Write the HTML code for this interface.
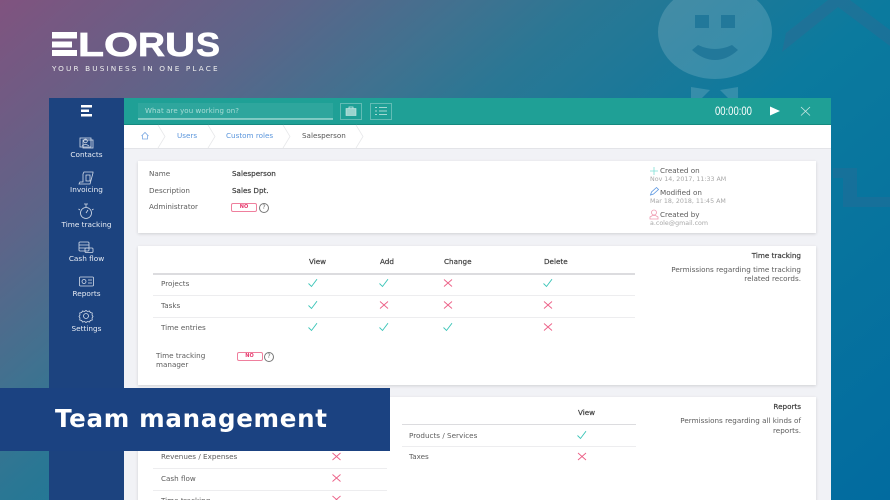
<!DOCTYPE html>
<html><head><meta charset="utf-8"><style>
html,body{margin:0;padding:0}
#p{position:relative;width:890px;height:500px;overflow:hidden;background:linear-gradient(140deg,#80537f 0%,#5c6589 20%,#3f7290 32%,#2a7794 40%,#0b7a9e 60%,#026b9f 100%);font-family:"DejaVu Sans",sans-serif}
.a{position:absolute}
.t{position:absolute;white-space:nowrap;line-height:10px;font-size:7.2px;color:#5c5c5c}
.b{color:#3c3c3c;-webkit-text-stroke:.2px #3c3c3c}
.d{font-size:6.3px;color:#a8a8a8}
.n{color:#e8edf5;font-size:7.3px;text-align:center;width:74px;left:49.5px}
.card{position:absolute;background:#fff;box-shadow:0 1px 3px rgba(0,0,0,.14)}
.l{position:absolute;height:1px;background:#e4e4e6}
svg{position:absolute;overflow:visible}
.no{position:absolute;width:24px;height:7px;border:1px solid #ef7f9d;border-radius:2px;background:#fff;color:#e7366c;font:bold 5px/7px "DejaVu Sans",sans-serif;text-align:center}
.q{position:absolute;width:8px;height:8px;border:1px solid #777;border-radius:50%;color:#666;font:6px/8px "DejaVu Sans",sans-serif;text-align:center}
</style></head><body><div id="p">
<svg width="890" height="500" style="left:0;top:0">
<defs>
<g id="c"><path d="M-4.500 0.500L-1.500 3.500L4 -3.800" fill="none" stroke="#3cc5b8" stroke-width=".9"/></g>
<g id="x"><path d="M-4 -3.500L4 3.500M4 -3.500L-4 3.500" fill="none" stroke="#ec5f86" stroke-width=".9"/></g>
</defs>
<g fill="#fff" opacity=".15">
<ellipse cx="715" cy="32" rx="57" ry="47"/>
<path d="M691 87L710 90L702 98H691Z"/><path d="M738 87L720 90L728 98H738Z"/>
</g>
<g fill="#22789a"><rect x="695" y="15" width="14" height="13"/><rect x="721" y="15" width="14" height="13"/><path d="M692 50L698 45Q715 53 732 45L738 50Q727 60 715 60Q703 60 692 50Z"/></g>
<path d="M786 33L828 0H850L890 30V46L838 7L782 52Z" fill="#3f6590" fill-opacity=".3"/>
<path d="M833 168H857V197H890V207H843V178H833Z" fill="#3f6590" fill-opacity=".25"/>
<g fill="#fff">
<rect x="52" y="32" width="25" height="6.500"/><rect x="52" y="41.500" width="20" height="6"/><rect x="52" y="50" width="25" height="6"/>
</g>
<g fill="#fff" stroke="#fff" stroke-width=".7" font-family="Liberation Sans" font-weight="bold" font-size="33">
<text x="78" y="56" textLength="26" lengthAdjust="spacingAndGlyphs">L</text>
<text x="104" y="56" textLength="34" lengthAdjust="spacingAndGlyphs">O</text>
<text x="138" y="56" textLength="27" lengthAdjust="spacingAndGlyphs">R</text>
<text x="165" y="56" textLength="30" lengthAdjust="spacingAndGlyphs">U</text>
<text x="196" y="56" textLength="24" lengthAdjust="spacingAndGlyphs">S</text>
</g>
</svg>
<div class="t" style="left:52px;top:64px;color:#eee;font-size:7.3px;letter-spacing:2.12px;">YOUR BUSINESS IN ONE PLACE</div>

<div class="a" style="left:49px;top:98px;width:75px;height:402px;background:#1c437f"></div>
<div class="a" style="left:124px;top:98px;width:707px;height:27px;background:#1fa096;border-bottom:1px solid #15897f;box-sizing:border-box"></div>
<div class="a" style="left:124px;top:125px;width:707px;height:375px;background:#f1f2f6"></div>
<div class="a" style="left:124px;top:125px;width:707px;height:23px;background:#fff;border-bottom:1px solid #e3e4e8"></div>

<svg width="890" height="500" style="left:0;top:0">
<g fill="#fff"><rect x="81" y="105" width="11" height="2.500"/><rect x="81" y="109.500" width="8" height="2.500"/><rect x="81" y="114" width="11" height="2.500"/></g>
<g fill="none" stroke="#d6deea" stroke-width=".8">
<rect x="80" y="138" width="11" height="9"/><rect x="83" y="140" width="10" height="8"/><circle cx="85.500" cy="141" r="1.800"/><path d="M82 146q3.500 -3 7 0"/>
<path d="M83 174V182H80L79 184H90L93 173V172H84ZM86 175h4v6h-4z"/>
<circle cx="86" cy="213" r="5.500"/><path d="M86 207V204M84 204h4M86 213l2 -3M78.500 209l1.500 1M93.500 209l-1.500 1"/>
<rect x="79" y="242" width="10" height="9" rx="1"/><path d="M79 245h10M79 248h10"/><rect x="85" y="248" width="8" height="4.500" rx="1"/>
<rect x="79.500" y="277" width="14" height="9" rx="1"/><circle cx="84" cy="281.500" r="2"/><path d="M88 280h4M88 283h4"/>
<circle cx="86" cy="316" r="2.500"/><path d="M86 310.500l1.500 1 2-.5 .8 1.500 2 .5 -.3 2 1 1.500 -1 1.500 .3 2 -2 .5 -.8 1.500 -2 -.5 -1.500 1 -1.500 -1 -2 .5 -.8 -1.500 -2 -.5 .3 -2 -1 -1.500 1 -1.500 -.3 -2 2 -.5 .8 -1.500 2 .5z"/>
</g>
<rect x="138" y="103" width="195" height="16" fill="#fff" fill-opacity=".07"/>
<rect x="138" y="118.500" width="195" height="1" fill="#d6f0ec"/>
<g fill="none" stroke="#fff" stroke-opacity=".3"><rect x="340.500" y="103.500" width="21" height="16"/><rect x="370.500" y="103.500" width="21" height="16"/></g>
<g fill="#cfeae6" fill-opacity=".7" stroke="#cfeae6" stroke-width=".6"><rect x="346" y="108.500" width="10" height="7"/></g>
<g fill="none" stroke="#cfeae6" stroke-width=".8"><path d="M349 108.500v-1.500h4v1.500"/><path d="M375 107.500h2M375 111h2M375 114.500h2M379 107.500h8M379 111h8M379 114.500h8"/></g>
<path d="M770 106.500L780 111L770 115.500Z" fill="#fff"/>
<path d="M801 107L810 115.500M810 107L801 115.500" stroke="#cfe9e6" stroke-width=".8"/>
<g fill="none" stroke="#e7e8ea" stroke-width=".8">
<path d="M158 125L165 136.500L158 148M208 125L215 136.500L208 148M283 125L290 136.500L283 148M356 125L363 136.500L356 148"/>
</g>
<path d="M141.500 136L145 132.500L148.500 136M142.500 135.500V139H147.500V135.500" fill="none" stroke="#7aa8e2" stroke-width=".8"/>
</svg>

<div class="t" style="left:145px;top:106px;color:#a9dcd6;font-size:7px;letter-spacing:.1px">What are you working on?</div>
<div class="t" style="left:715px;top:105px;color:#fff;font:12px/12px 'Liberation Sans',sans-serif;transform:scaleX(.79);transform-origin:0 0">00:00:00</div>
<div class="t" style="left:177px;top:131px;color:#5b96dc">Users</div>
<div class="t" style="left:226px;top:131px;color:#5b96dc">Custom roles</div>
<div class="t" style="left:302px;top:131px;color:#555">Salesperson</div>

<div class="t n" style="top:150px">Contacts</div>
<div class="t n" style="top:185px">Invoicing</div>
<div class="t n" style="top:219.500px">Time tracking</div>
<div class="t n" style="top:254px">Cash flow</div>
<div class="t n" style="top:289px">Reports</div>
<div class="t n" style="top:323.500px">Settings</div>

<div class="card" style="left:138px;top:161px;width:678px;height:72px"></div>
<div class="t" style="left:149px;top:169px">Name</div>
<div class="t" style="left:149px;top:185.500px">Description</div>
<div class="t" style="left:149px;top:202px">Administrator</div>
<div class="t b" style="left:232px;top:169px">Salesperson</div>
<div class="t b" style="left:232px;top:185.500px">Sales Dpt.</div>
<div class="no" style="left:231px;top:202.500px">NO</div>
<div class="q" style="left:259px;top:202.500px">?</div>
<div class="t" style="left:660px;top:166px">Created on</div>
<div class="t d" style="left:650px;top:175px">Nov 14, 2017, 11:33 AM</div>
<div class="t" style="left:660px;top:188px">Modified on</div>
<div class="t d" style="left:650px;top:197px">Mar 18, 2018, 11:45 AM</div>
<div class="t" style="left:660px;top:209.500px">Created by</div>
<div class="t d" style="left:650px;top:218.500px">a.cole@gmail.com</div>

<div class="card" style="left:138px;top:246px;width:678px;height:139px"></div>
<div class="l" style="left:153px;top:273px;width:482px;height:1.500px;background:#dcdcdf"></div>
<div class="l" style="left:153px;top:295px;width:482px;background:#ededef"></div>
<div class="l" style="left:153px;top:317px;width:482px;background:#ededef"></div>
<div class="t b" style="left:309px;top:257px">View</div>
<div class="t b" style="left:380px;top:257px">Add</div>
<div class="t b" style="left:444px;top:257px">Change</div>
<div class="t b" style="left:544px;top:257px">Delete</div>
<div class="t" style="left:161px;top:279px">Projects</div>
<div class="t" style="left:161px;top:301px">Tasks</div>
<div class="t" style="left:161px;top:322.500px">Time entries</div>
<div class="t" style="left:156px;top:351px">Time tracking</div>
<div class="t" style="left:156px;top:360px">manager</div>
<div class="no" style="left:236.500px;top:351.500px">NO</div>
<div class="q" style="left:264px;top:351.500px">?</div>
<div class="t b" style="right:89px;top:251px">Time tracking</div>
<div class="t" style="right:89px;top:265px">Permissions regarding time tracking</div>
<div class="t" style="right:89px;top:274px">related records.</div>

<div class="card" style="left:138px;top:397px;width:678px;height:110px"></div>
<div class="l" style="left:402px;top:424px;width:234px;background:#dcdcdf"></div>
<div class="l" style="left:402px;top:446px;width:234px;background:#ededef"></div>
<div class="l" style="left:153px;top:468px;width:234px;background:#ededef"></div>
<div class="l" style="left:153px;top:489.500px;width:234px;background:#ededef"></div>
<div class="t b" style="left:578px;top:408px">View</div>
<div class="t" style="left:409px;top:430.500px">Products / Services</div>
<div class="t" style="left:409px;top:452px">Taxes</div>
<div class="t" style="left:161px;top:452px">Revenues / Expenses</div>
<div class="t" style="left:161px;top:474px">Cash flow</div>
<div class="t" style="left:161px;top:495.500px">Time tracking</div>
<div class="t b" style="right:89px;top:402px">Reports</div>
<div class="t" style="right:89px;top:416px">Permissions regarding all kinds of</div>
<div class="t" style="right:89px;top:425.500px">reports.</div>

<svg width="890" height="500" style="left:0;top:0">
<use href="#c" x="313" y="283"/><use href="#c" x="384" y="283"/><use href="#x" x="448" y="283"/><use href="#c" x="548" y="283"/>
<use href="#c" x="313" y="305"/><use href="#x" x="384" y="305"/><use href="#x" x="448" y="305"/><use href="#x" x="548" y="305"/>
<use href="#c" x="313" y="327"/><use href="#c" x="384" y="327"/><use href="#c" x="448" y="327"/><use href="#x" x="548" y="327"/>
<use href="#c" x="582" y="435"/><use href="#x" x="582" y="456.500"/>
<use href="#x" x="336.500" y="456.500"/><use href="#x" x="336.500" y="478"/><use href="#x" x="336.500" y="499.500"/>
<path d="M650 171H658M654 167V175" stroke="#7fe0d6" stroke-width=".8"/>
<path d="M650.500 195l1 -3 5 -4.500 2 2 -5 4.500z" fill="none" stroke="#5b96e0" stroke-width=".8"/>
<circle cx="654" cy="212.500" r="2.500" fill="none" stroke="#ef9ab0" stroke-width=".8"/><path d="M650 219h8v-2l-2.500 -1.500h-3l-2.500 1.500z" fill="none" stroke="#ef9ab0" stroke-width=".8"/>
</svg>

<div class="a" style="left:0;top:388px;width:390px;height:63px;background:#1b4281"></div>
<div class="t" style="left:55px;top:405px;color:#fff;font:bold 24.500px/28px 'DejaVu Sans',sans-serif;letter-spacing:.7px">Team management</div>
</div></body></html>
